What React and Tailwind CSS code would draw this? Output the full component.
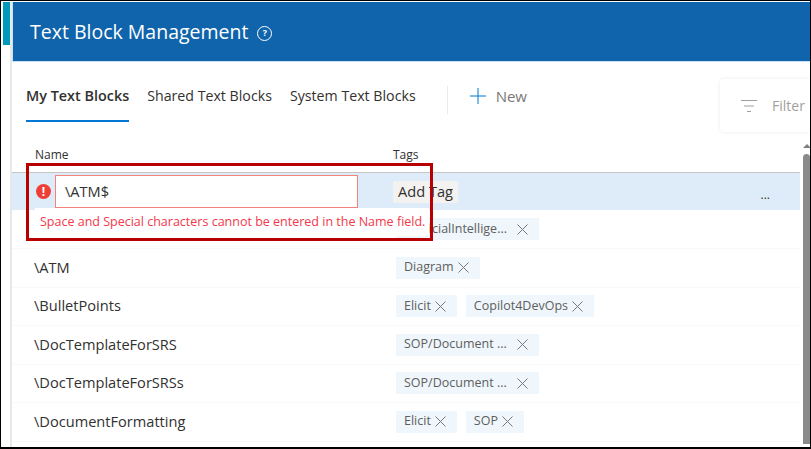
import React from "react";

const F = "[font-family:'Open_Sans','Noto_Sans',sans-serif]";

function Cross() {
  return (
    <svg width="11" height="11" viewBox="0 0 11 11" fill="none" stroke="#797775" strokeWidth="1" className="shrink-0">
      <path d="M0.5 0.5l10 10M10.5 0.5l-10 10" />
    </svg>
  );
}

function Tag({ label, wide }) {
  return (
    <span className={`flex h-[22px] items-center bg-[#eff6fc] pl-[8px] pr-[11px] text-[12.5px] whitespace-nowrap text-[#605e5c] ${wide ? "w-[143px] justify-between" : "gap-[4px]"}`}>
      {label}
      <Cross />
    </span>
  );
}

function Row({ name, tags }) {
  return (
    <div className="flex h-[38.5px] items-center border-b border-[#faf9f8]">
      <div className="w-[361px] pl-[22px] text-[14.6px] text-[#323130]">{name}</div>
      <div className="flex gap-[9px] pl-[23px]">
        {tags.map((t) => (
          <Tag key={t} label={t} wide={t.endsWith("...")} />
        ))}
      </div>
    </div>
  );
}

export default function App() {
  return (
    <div className={`relative flex h-[449px] w-[811px] overflow-hidden border border-b-2 border-black bg-white pt-px ${F}`}>
      <div className="w-[11px] shrink-0 border-r-2 border-[#e8e8e8] pl-[2px]">
        <div className="h-[43px] w-[7px] bg-[#0099bc]" />
      </div>
      <div className="flex min-w-0 flex-1 flex-col">
        <div className="flex h-[60px] shrink-0 items-center gap-[9px] border-b border-l border-[#c7e0f4] bg-[#1064ab] pl-[17px] text-[19.5px] text-white">
          Text Block Management
          <span className="mt-[3px] flex h-[15px] w-[15px] items-center justify-center rounded-full border border-white text-[9px] font-bold">?</span>
        </div>
        <div className="flex h-[76px] shrink-0">
          <div className="flex items-start pl-[14px] pt-[24px] text-[14.2px] leading-[20px] text-[#323130]">
            <span className="border-b-2 border-[#0078d4] pb-[14px] text-[14.4px] font-semibold">My Text Blocks</span>
            <span className="ml-[18px]">Shared Text Blocks</span>
            <span className="ml-[18px]">System Text Blocks</span>
            <span className="ml-[31px] h-[28px] w-px bg-[#edebe9]" />
            <span className="ml-[22px] flex items-center gap-[10px] text-[15px] text-[#797775]">
              <svg width="16" height="16" viewBox="0 0 16 16" fill="none" stroke="#0078d4" strokeWidth="1">
                <path d="M0 8h16M8 0v16" />
              </svg>
              New
            </span>
          </div>
          <div className="ml-auto mt-[17px] flex h-[53px] w-[90px] items-center gap-[15px] rounded-l-[4px] pl-[21px] text-[14px] text-[#a19f9d] shadow-[0_0_4px_rgba(0,0,0,0.08)]">
            <svg width="16" height="14" viewBox="0 0 16 14" fill="none" stroke="#a19f9d" strokeWidth="1">
              <path d="M0 1.5h16M3 7h10M6 12.5h4" />
            </svg>
            Filter
          </div>
        </div>
        <div className="relative flex min-h-0 flex-1 flex-col pr-[10px]">
          <div className="flex h-[35px] shrink-0 items-end border-b border-[#c8c6c4] pb-[8px] text-[12px] text-[#323130]">
            <div className="w-[381px] pl-[23px]">Name</div>
            <div>Tags</div>
          </div>
          <div className="flex h-[37px] shrink-0 items-center bg-[#deecf9]">
            <div className="flex w-[361px] items-center pl-[24px]">
              <span className="flex h-[15px] w-[15px] items-center justify-center rounded-full bg-[#ee3f36] text-[12px] font-bold text-white">!</span>
              <div className="ml-[4px] flex h-[33px] w-[303px] items-center border border-[#f4827a] bg-white pl-[9px] text-[14.6px] text-[#323130]">\ATM$</div>
            </div>
            <div className="ml-[20px] flex h-[22px] items-center rounded-[2px] bg-[#f3f2f1] px-[5px] text-[14.6px] text-[#323130]">Add Tag</div>
            <div className="ml-auto mr-[30px] mt-[6px] text-[12px] text-[#323130]">...</div>
          </div>
          <div className="relative flex h-[39px] shrink-0 items-center border-b border-[#faf9f8]">
            <div className="absolute left-[23px] top-[-2px] z-10 h-[28px] w-[394px] bg-white pl-[5px] pt-[5px] text-[12.5px] whitespace-nowrap text-[#f2384a]">Space and Special characters cannot be entered in the Name field.</div>
            <div className="ml-[384px] flex">
              <Tag label="ArtificialIntellige..." wide />
            </div>
          </div>
          <Row name="\ATM" tags={["Diagram"]} />
          <Row name="\BulletPoints" tags={["Elicit", "Copilot4DevOps"]} />
          <Row name="\DocTemplateForSRS" tags={["SOP/Document ..."]} />
          <Row name="\DocTemplateForSRSs" tags={["SOP/Document ..."]} />
          <Row name="\DocumentFormatting" tags={["Elicit", "SOP"]} />
          <div className="absolute right-0 top-[6px] flex h-[300px] w-[7px] flex-col items-center">
            <div className="h-0 w-0 border-x-[4px] border-b-[4px] border-x-transparent border-b-[#808080]" />
            <div className="mt-[6px] w-[7px] flex-1 rounded-t-[4px] bg-[#8a8a8a]" />
          </div>
        </div>
      </div>
      <div className="pointer-events-none absolute left-[25px] top-[162px] h-[78px] w-[407px] border-[3px] border-[#b80000]" />
    </div>
  );
}
